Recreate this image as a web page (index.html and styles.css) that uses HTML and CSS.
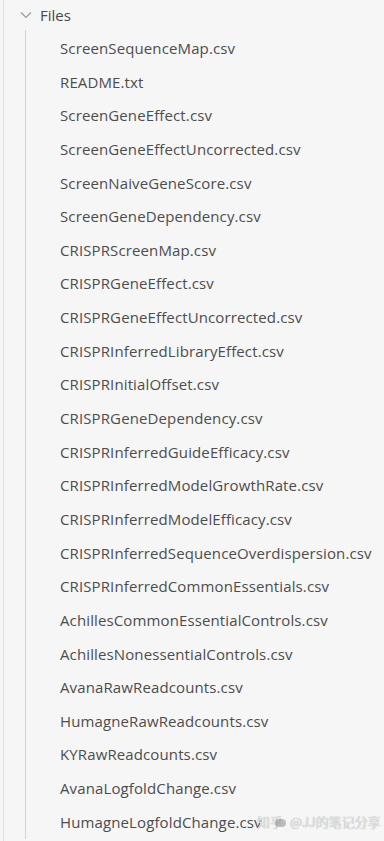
FILE: index.html
```html
<!DOCTYPE html>
<html>
<head>
<meta charset="utf-8">
<link rel="stylesheet" href="styles.css">
</head>
<body>
<div class="panel">
  <div class="folder">
    <svg class="chev" width="12" height="8" viewBox="0 0 12 8"><path d="M1 1.5 L6 6.5 L11 1.5" fill="none" stroke="#9a9a9a" stroke-width="1.2"/></svg>
    <span class="folder-name">Files</span>
  </div>
  <div class="tree">
    <ul class="files">
      <li>ScreenSequenceMap.csv</li>
      <li>README.txt</li>
      <li>ScreenGeneEffect.csv</li>
      <li>ScreenGeneEffectUncorrected.csv</li>
      <li>ScreenNaiveGeneScore.csv</li>
      <li>ScreenGeneDependency.csv</li>
      <li>CRISPRScreenMap.csv</li>
      <li>CRISPRGeneEffect.csv</li>
      <li>CRISPRGeneEffectUncorrected.csv</li>
      <li>CRISPRInferredLibraryEffect.csv</li>
      <li>CRISPRInitialOffset.csv</li>
      <li>CRISPRGeneDependency.csv</li>
      <li>CRISPRInferredGuideEfficacy.csv</li>
      <li>CRISPRInferredModelGrowthRate.csv</li>
      <li>CRISPRInferredModelEfficacy.csv</li>
      <li>CRISPRInferredSequenceOverdispersion.csv</li>
      <li>CRISPRInferredCommonEssentials.csv</li>
      <li>AchillesCommonEssentialControls.csv</li>
      <li>AchillesNonessentialControls.csv</li>
      <li>AvanaRawReadcounts.csv</li>
      <li>HumagneRawReadcounts.csv</li>
      <li>KYRawReadcounts.csv</li>
      <li>AvanaLogfoldChange.csv</li>
      <li>HumagneLogfoldChange.csv</li>
    </ul>
  </div>
</div>
<div class="watermark"><span class="wm-zh">知乎</span><span class="wm-logo"></span><span class="wm-user">@JJ的笔记分享</span></div>
</body>
</html>
```
FILE: styles.css
```css
html, body {
  margin: 0;
  padding: 0;
  background: #f6f6f6;
}
body {
  font-family: "Open Sans", "Noto Sans", sans-serif;
  color: #4d4d4d;
  width: 384px;
  height: 841px;
  overflow: hidden;
  position: relative;
}
.panel {
  margin-left: 3px;
  border-left: 1px solid #dedede;
  min-height: 841px;
}
.folder {
  display: flex;
  align-items: center;
  height: 30px;
  padding-left: 16px;
}
.chev {
  display: block;
  margin-right: 8px;
}
.folder-name {
  font-size: 15px;
  color: #484848;
}
.tree {
  margin-left: 21px;
  border-left: 1px solid #d4d4d4;
}
.files {
  list-style: none;
  margin: 0;
  padding: 2px 0 0 34px;
}
.files li {
  height: 33.65px;
  line-height: 33.65px;
  font-size: 15px;
  letter-spacing: 0.12px;
  white-space: nowrap;
}
.watermark {
  position: absolute;
  left: 257px;
  top: 812px;
  font-family: "Noto Sans CJK SC", sans-serif;
  font-size: 13px;
  color: rgba(235,235,235,0.9);
  text-shadow: 0 0 1px rgba(90,90,90,0.6);
  display: flex;
  align-items: center;
}
.wm-logo {
  width: 11px;
  height: 8px;
  margin: 2px 4px 0 -8px;
  border-radius: 4px;
  background: rgba(120,120,120,0.45);
}
```
